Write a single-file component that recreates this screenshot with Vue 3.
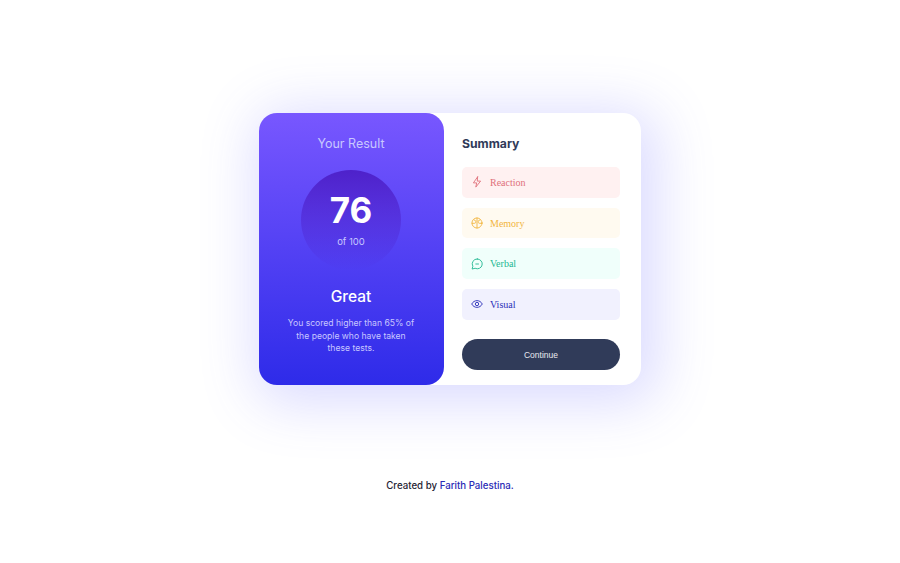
<script setup>
const items = [
  { name: "Reaction", kind: "reaction" },
  { name: "Memory", kind: "memory" },
  { name: "Verbal", kind: "verbal" },
  { name: "Visual", kind: "visual" },
];
</script>

<template>
  <div class="page">
    <main class="card">
      <section class="result">
        <h2 class="result-title">Your Result</h2>
        <div class="score">
          <span class="score-value">76</span>
          <span class="score-total">of 100</span>
        </div>
        <h3 class="grade">Great</h3>
        <p class="desc">You scored higher than 65% of the people who have taken these tests.</p>
      </section>

      <section class="summary">
        <h2 class="summary-title">Summary</h2>
        <ul class="list">
          <li v-for="item in items" :key="item.name" class="row" :class="item.kind">
            <!-- icons -->
            <svg v-if="item.kind === 'reaction'" class="icon" viewBox="0 0 20 20" fill="none" stroke="currentColor" stroke-width="1.500" stroke-linejoin="round" stroke-linecap="round">
              <path d="M11 1.500 4 11.500h5.500L8 18.500l8-10h-5.500L11 1.500Z" />
            </svg>
            <svg v-else-if="item.kind === 'memory'" class="icon" viewBox="0 0 20 20" fill="none" stroke="currentColor" stroke-width="1.500" stroke-linecap="round">
              <circle cx="10" cy="10" r="8.400" />
              <path d="M10 1.600v16.800M1.800 10.500H6c1.500 0 2-1 2-2.500M18.200 10.500H14c-1.500 0-2-1-2-2.500M5 4.500c.5 1.500 1.500 2 3 2M15 4.500c-.5 1.500-1.500 2-3 2" />
            </svg>
            <svg v-else-if="item.kind === 'verbal'" class="icon" viewBox="0 0 20 20" fill="none" stroke="currentColor" stroke-width="1.500" stroke-linecap="round" stroke-linejoin="round">
              <path d="M10.500 1.600a8.200 8.200 0 1 1-3.700 15.500L1.800 18.400l1.300-4.600A8.200 8.200 0 0 1 10.500 1.600Z" />
              <path d="M8 10h4.500" />
            </svg>
            <svg v-else class="icon" viewBox="0 0 20 20" fill="none" stroke="currentColor" stroke-width="1.500">
              <path d="M1.200 10C3.200 6.300 6.400 4.400 10 4.400s6.800 1.900 8.800 5.600c-2 3.700-5.200 5.600-8.800 5.600S3.200 13.700 1.200 10Z" />
              <circle cx="10" cy="10" r="2.800" />
            </svg>
            <span class="row-name">{{ item.name }}</span>
          </li>
        </ul>
        <button class="continue">Continue</button>
      </section>
    </main>

    <footer class="credit">Created by <a class="credit-link">Farith Palestina.</a></footer>
  </div>
</template>

<style scoped>
.page {
  display: flex;
  flex-direction: column;
  align-items: center;
  height: 563px;
  padding-top: 113px;
  box-sizing: border-box;
  font-family: Inter, "Noto Sans", sans-serif;
  background: #fff;
  overflow: hidden;
}

.card {
  display: flex;
  width: 382px;
  height: 272px;
  border-radius: 18px;
  background: #fff;
  box-shadow: 7px 8px 55px 10px rgba(90, 90, 255, 0.22);
}

.result {
  display: flex;
  flex-direction: column;
  align-items: center;
  width: 185px;
  box-sizing: border-box;
  padding: 22px 1px 0 0;
  border-radius: 18px;
  background: linear-gradient(180deg, #7857ff 0%, #2e2be9 100%);
  text-align: center;
}

.result-title {
  margin: 0;
  font-size: 12.500px;
  line-height: 17px;
  font-weight: 400;
  color: #c8c7ff;
}

.score {
  display: flex;
  flex-direction: column;
  align-items: center;
  width: 100px;
  height: 100px;
  margin-top: 18px;
  padding-top: 19px;
  box-sizing: border-box;
  border-radius: 50%;
  background: linear-gradient(180deg, #4e21ca 0%, rgba(36, 33, 203, 0) 100%);
}

.score-value {
  font-size: 35px;
  line-height: 43px;
  font-weight: 700;
  color: #fff;
}

.score-total {
  margin-top: 3px;
  font-size: 9.500px;
  line-height: 14px;
  color: #c8c7ff;
}

.grade {
  margin: 16px 0 0;
  font-size: 15.500px;
  line-height: 21px;
  font-weight: 500;
  color: #fff;
}

.desc {
  width: 130px;
  margin: 10px 0 0;
  font-size: 8.600px;
  line-height: 12.500px;
  color: #c8c7ff;
}

.summary {
  flex: 1;
  padding: 22px 21px 0 18px;
}

.summary-title {
  margin: 0 0 15px;
  font-size: 12.200px;
  line-height: 17px;
  font-weight: 700;
  color: #303b59;
}

.list {
  display: flex;
  flex-direction: column;
  gap: 10px;
  margin: 0;
  padding: 0;
  list-style: none;
}

.row {
  display: flex;
  align-items: center;
  gap: 7px;
  height: 30.700px;
  padding-left: 9px;
  border-radius: 5px;
  font-family: "Liberation Serif", serif;
  font-size: 10px;
}

.icon {
  width: 12px;
  height: 12px;
  flex-shrink: 0;
}

.reaction {
  background: #fff1f1;
  color: #e0707a;
}

.memory {
  background: #fffaf0;
  color: #f2b53e;
}

.verbal {
  background: #f0fffb;
  color: #22b892;
}

.visual {
  background: #f1f1fe;
  color: #2a2fb8;
}

.continue {
  display: block;
  width: 100%;
  height: 31px;
  margin-top: 19px;
  padding-top: 2px;
  border: none;
  border-radius: 16px;
  background: #303b59;
  color: #e8e9ef;
  font-family: "Liberation Sans", sans-serif;
  font-size: 8.500px;
}

.credit {
  margin-top: 94px;
  font-size: 9.700px;
  line-height: 14px;
  font-weight: 500;
  color: #1f2433;
}

.credit-link {
  color: #2a2bb5;
}
</style>

<style>
body {
  margin: 0;
}
</style>
